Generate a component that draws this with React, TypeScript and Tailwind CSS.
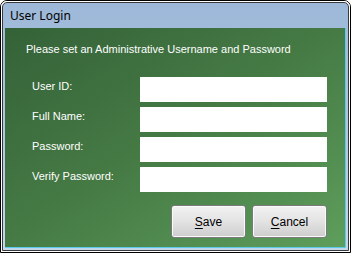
function UnderlinedButton({ hotkey, rest }: { hotkey: string; rest: string }) {
  return (
    <button
      type="button"
      className="h-[33px] w-[75px] rounded-[3px] border border-[#7a7a7a] bg-gradient-to-b from-[#f2f2f2] via-[#e3e3e3] to-[#cdcdcd] text-[12px] text-black shadow-[inset_0_0_0_1px_#fafafa]"
      style={{ fontFamily: '"Liberation Sans", Arial, sans-serif' }}
    >
      <span className="underline underline-offset-2">{hotkey}</span>
      {rest}
    </button>
  );
}

const fields = ["User ID:", "Full Name:", "Password:", "Verify Password:"];

export default function App() {
  return (
    <div className="h-[253px] w-[351px] bg-white">
      <div className="h-full rounded-t-[7px] border border-black">
        <div className="h-full rounded-t-[6px] border border-white">
          <div className="flex h-full flex-col rounded-t-[5px] border border-[#3a3a3a] bg-gradient-to-b from-[#9db8d8] to-[#c3d7ec]">
            <div
              className="flex h-[25px] items-center pl-[7px] text-[12px] text-black"
              style={{ fontFamily: '"Noto Sans", "Open Sans", sans-serif' }}
            >
              User Login
            </div>
            <div className="flex-1 px-[2px] pb-[2px]">
              <div className="h-full border-r border-b border-[#5cc8ea]">
                <div
                  className="flex h-[219px] w-[340px] flex-col bg-gradient-to-br from-[#346238] via-[#467b45] to-[#5e9e5c] text-[11px] text-white"
                  style={{ fontFamily: '"Liberation Sans", Arial, sans-serif' }}
                >
                  <p className="pl-[21px] pt-[14px] leading-[14px]">
                    Please set an Administrative Username and Password
                  </p>
                  <div className="mt-[21px] flex flex-col gap-[5px]">
                    {fields.map((label) => (
                      <div key={label} className="flex h-[25px] items-start">
                        <span className="w-[135px] shrink-0 whitespace-nowrap pl-[27px] pt-[2px] leading-[14px]">
                          {label}
                        </span>
                        <div className="h-[25px] w-[187px] bg-white" />
                      </div>
                    ))}
                  </div>
                  <div className="mt-[13px] flex gap-[6px] pl-[166px]">
                    <UnderlinedButton hotkey="S" rest="ave" />
                    <UnderlinedButton hotkey="C" rest="ancel" />
                  </div>
                </div>
              </div>
            </div>
          </div>
        </div>
      </div>
    </div>
  );
}
